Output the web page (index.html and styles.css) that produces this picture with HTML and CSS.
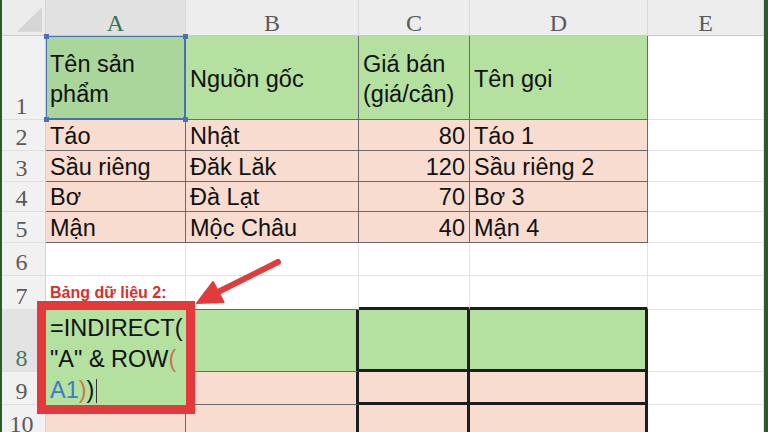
FILE: index.html
```html
<!DOCTYPE html>
<html lang="vi">
<head>
<meta charset="utf-8">
<title>Excel INDIRECT</title>
<link rel="stylesheet" href="styles.css">
</head>
<body>
<div class="frame">
  <div class="stripe-l"></div>
  <div class="sheet">
    <!-- header row -->
    <div class="corner"><svg width="44" height="36" viewBox="0 0 44 36"><polygon points="15,33 41,33 41,8" fill="#d5d5d5"/></svg></div>
    <div class="ch act">A</div>
    <div class="ch">B</div>
    <div class="ch">C</div>
    <div class="ch">D</div>
    <div class="ch">E</div>

    <!-- row 1 -->
    <div class="rh">1</div>
    <div class="t g hd ref">Tên sản phẩm<span class="hdl tl"></span><span class="hdl tr"></span><span class="hdl bl"></span><span class="hdl br"></span></div>
    <div class="t g hd">Nguồn gốc</div>
    <div class="t g hd">Giá bán (giá/cân)</div>
    <div class="t g hd">Tên gọi</div>
    <div class="c"></div>

    <!-- row 2 -->
    <div class="rh">2</div>
    <div class="t p">Táo</div>
    <div class="t p">Nhật</div>
    <div class="t p num">80</div>
    <div class="t p">Táo 1</div>
    <div class="c"></div>

    <!-- row 3 -->
    <div class="rh">3</div>
    <div class="t p">Sầu riêng</div>
    <div class="t p">Đăk Lăk</div>
    <div class="t p num">120</div>
    <div class="t p">Sầu riêng 2</div>
    <div class="c"></div>

    <!-- row 4 -->
    <div class="rh">4</div>
    <div class="t p">Bơ</div>
    <div class="t p">Đà Lạt</div>
    <div class="t p num">70</div>
    <div class="t p">Bơ 3</div>
    <div class="c"></div>

    <!-- row 5 -->
    <div class="rh">5</div>
    <div class="t p">Mận</div>
    <div class="t p">Mộc Châu</div>
    <div class="t p num">40</div>
    <div class="t p">Mận 4</div>
    <div class="c"></div>

    <!-- row 6 -->
    <div class="rh">6</div>
    <div class="c"></div>
    <div class="c"></div>
    <div class="c"></div>
    <div class="c"></div>
    <div class="c"></div>

    <!-- row 7 -->
    <div class="rh">7</div>
    <div class="c label">Bảng dữ liệu 2:</div>
    <div class="c bdark"></div>
    <div class="c bthick"></div>
    <div class="c bthick"></div>
    <div class="c"></div>

    <!-- row 8 -->
    <div class="rh act">8</div>
    <div class="ed">=INDIRECT(<br>"A" &amp; ROW<span class="par">(</span><br><span class="refc">A1</span><span class="par">)</span>)<span class="caret"></span></div>
    <div class="t g rthick"></div>
    <div class="g k"></div>
    <div class="g k"></div>
    <div class="c"></div>

    <!-- row 9 -->
    <div class="rh">9</div>
    <div class="t p rthick"></div>
    <div class="p k"></div>
    <div class="p k"></div>
    <div class="c"></div>

    <!-- row 10 -->
    <div class="rh">10</div>
    <div class="t p"></div>
    <div class="t p rthick"></div>
    <div class="p k"></div>
    <div class="p k"></div>
    <div class="c"></div>
  </div>
  <div class="stripe-r"></div>

  <svg class="arrow" width="768" height="432" viewBox="0 0 768 432">
    <line x1="278" y1="262" x2="216" y2="293" stroke="#e33b3b" stroke-width="6" stroke-linecap="round"/>
    <polygon points="197,303 223.5,302 213,282" fill="#e33b3b" stroke="#e33b3b" stroke-width="2" stroke-linejoin="round"/>
  </svg>
</div>
</body>
</html>
```

FILE: styles.css
```css
* {
  box-sizing: border-box;
}

body {
  margin: 0;
  background: #ffffff;
  font-family: "Liberation Sans", Arial, sans-serif;
}

.frame {
  position: relative;
  display: flex;
  width: 768px;
  height: 432px;
  overflow: hidden;
  background: #ffffff;
}

.stripe-l {
  flex: none;
  width: 2px;
  background: #2c5a2a;
}

.stripe-r {
  flex: none;
  width: 4px;
  background: #2c5a2a;
}

.sheet {
  flex: none;
  display: grid;
  grid-template-columns: 44px 140px 173px 111px 178px 116px;
  grid-template-rows: 36px 84px 31px 31px 30px 31px 33px 34px 62px 33px 33px;
}

.sheet > div {
  display: flex;
  align-items: flex-end;
  padding-left: 4px;
  border-right: 1px solid #e2e2e2;
  border-bottom: 1px solid #e2e2e2;
  font-size: 23.5px;
  line-height: 28px;
  color: #111111;
  white-space: nowrap;
}

/* headers */
.sheet > .corner {
  padding: 0;
  background: #ececec;
  border-right-color: #d4d4d4;
  border-bottom-color: #cccccc;
}

.corner svg {
  display: block;
}

.sheet > .ch {
  justify-content: center;
  padding: 0;
  background: #ededed;
  border-right-color: #d9d9d9;
  border-bottom-color: #c9c9c9;
  font-family: "Liberation Serif", "Times New Roman", serif;
  font-size: 24px;
  line-height: 24px;
  color: #5a5a5a;
}

.sheet > .ch.act {
  background: #e1e1e1;
  color: #2f7650;
}

.sheet > .rh {
  justify-content: center;
  padding: 0 4px 1px 0;
  background: #f1f1f1;
  border-right-color: #d2d2d2;
  border-bottom-color: #e0e0e0;
  font-family: "Liberation Serif", "Times New Roman", serif;
  font-size: 24px;
  line-height: 24px;
  color: #5a5a5a;
}

.sheet > .rh.act {
  background: #e3e3e3;
  color: #3f7a5c;
}

/* data table */
.sheet > .t {
  border-right-color: #6a6a6a;
  border-bottom-color: #6a6a6a;
}

.g {
  background: #b4e0a0;
}

.p {
  background: #f7dccf;
}

.sheet > .hd {
  align-items: center;
  padding-top: 3px;
  line-height: 30px;
  white-space: normal;
}

.sheet > .num {
  justify-content: flex-end;
  padding-left: 0;
  padding-right: 4px;
}

/* referenced cell A1 */
.sheet > .ref {
  position: relative;
  background: #aad69b;
  box-shadow: inset 0 0 0 1px #4a72b2;
}

.hdl {
  position: absolute;
  width: 5px;
  height: 5px;
  background: #4a72b2;
}

.hdl.tl { left: -2px; top: -2px; }
.hdl.tr { right: -3px; top: -2px; }
.hdl.bl { left: -2px; bottom: -3px; }
.hdl.br { right: -3px; bottom: -3px; }

/* label */
.sheet > .label {
  padding-bottom: 6px;
  font-size: 16px;
  font-weight: bold;
  line-height: 20px;
  color: #d9302c;
  overflow: visible;
}

.sheet > .bdark {
  border-bottom-color: #666666;
}

.sheet > .bthick {
  border-bottom: 3px solid #1e1e1e;
}

.sheet > .rthick {
  border-right: 3px solid #1e1e1e;
}

.sheet > .k {
  border-right: 3px solid #1e1e1e;
  border-bottom: 3px solid #1e1e1e;
}

/* formula editor */
.sheet > .ed {
  grid-row: span 2;
  display: block;
  position: relative;
  z-index: 3;
  padding: 3px 0 0 4px;
  border: none;
  background: #b4e0a0;
  outline: 9px solid #e3393c;
  outline-offset: 0;
  line-height: 31px;
  white-space: nowrap;
}

.par {
  color: #c47a4c;
}

.refc {
  color: #3d7cc4;
}

.caret {
  display: inline-block;
  width: 0;
  height: 24px;
  margin-left: 2px;
  border-left: 1.5px solid #333333;
  vertical-align: -5px;
}

/* annotation arrow */
.arrow {
  position: absolute;
  left: 0;
  top: 0;
  z-index: 5;
  pointer-events: none;
}
```
